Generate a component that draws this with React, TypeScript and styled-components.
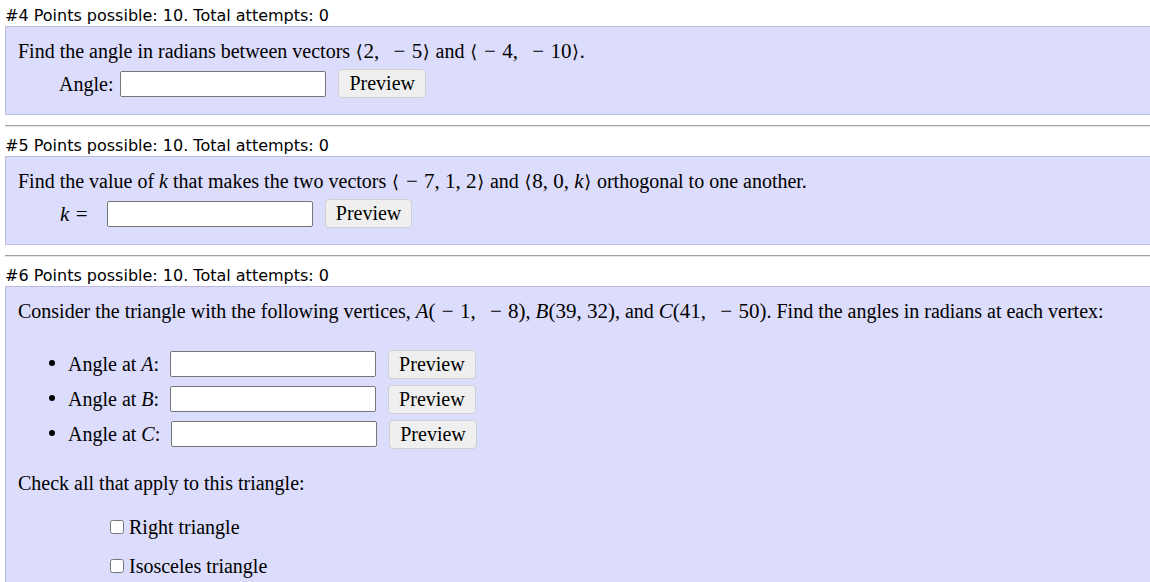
import React from "react";
import styled, { createGlobalStyle } from "styled-components";

const Global = createGlobalStyle`
  html, body { margin: 0; padding: 0; background: #fff; overflow: hidden; }
  body { font-family: "Liberation Serif", "Times New Roman", serif; color: #000; }
`;

const Page = styled.div`
  width: 1170px;
  padding: 5px 0 0 5px;
`;

const Header = styled.div`
  font-family: "DejaVu Sans", "Noto Sans", sans-serif;
  font-size: 16px;
  line-height: 21px;
  color: #000;
`;

const Box = styled.div`
  background: #dcdcfc;
  border: 1px solid #bcbce0;
  padding: 12px 12px 16px;
  font-size: 20px;
`;

const Separator = styled.hr`
  margin: 10px 0 8px;
  height: 0;
  border: none;
  border-top: 1px solid #a0a0a0;
  border-bottom: 1px solid #e4e4e4;
`;

const Line = styled.div<{ $mt?: number }>`
  height: 24px;
  line-height: 24px;
  margin-top: ${(p) => p.$mt ?? 0}px;
  white-space: nowrap;
`;

const AnswerRow = styled.div<{ $indent: number; $gap: number }>`
  display: flex;
  align-items: center;
  margin-top: 6px;
  padding-left: ${(p) => p.$indent}px;
  height: 29px;
  & > label {
    margin-right: ${(p) => p.$gap}px;
  }
`;

const Label = styled.label`
  line-height: 24px;
  vertical-align: middle;
`;

const TextInput = styled.input`
  box-sizing: border-box;
  width: 206px;
  height: 26px;
  border: 1px solid #767676;
  border-radius: 2px;
  background: #fff;
  margin: 0 12px 0 0;
  padding: 0 4px;
  vertical-align: middle;
`;

const PreviewButton = styled.button`
  box-sizing: border-box;
  height: 29px;
  padding: 0 10px;
  border: 1px solid #d0d0d0;
  border-radius: 4px;
  background: #efefef;
  font-family: "Liberation Serif", "Times New Roman", serif;
  font-size: 20px;
  color: #000;
  line-height: 27px;
  vertical-align: middle;
`;

const List = styled.ul`
  margin: 22px 0 0;
  padding-left: 50px;
`;

const ListItem = styled.li`
  height: 35px;
  line-height: 35px;
  & > label {
    margin-right: 11px;
  }
`;

const CheckGroup = styled.div`
  display: flex;
  flex-direction: column;
  gap: 15px;
  margin-top: 20px;
  padding-left: 88px;
`;

const CheckRow = styled.label`
  display: flex;
  align-items: center;
  line-height: 24px;
`;

const CheckBox = styled.input`
  width: 14px;
  height: 14px;
  margin: 0 5px 0 4px;
`;

const M = styled.span`
  font-family: "Liberation Serif", "DejaVu Serif", serif;
  font-size: 1.05em;
`;

const V = styled.i`
  font-family: "Liberation Serif", "DejaVu Serif", serif;
`;

const Br = styled.span`
  font-family: "DejaVu Serif", serif;
  font-size: 0.85em;
  margin: 0 0.04em;
`;

const Op = styled.span`
  margin: 0 0.3em;
`;

const Sp = styled.span`
  display: inline-block;
  width: 0.38em;
`;

const L = () => <Br>⟨</Br>;
const R = () => <Br>⟩</Br>;
const Minus = () => <Op>−</Op>;

const Answer = ({
  label,
  indent,
  gap,
}: {
  label: React.ReactNode;
  indent: number;
  gap: number;
}) => (
  <AnswerRow $indent={indent} $gap={gap}>
    <Label>{label}</Label>
    <TextInput type="text" />
    <PreviewButton type="button">Preview</PreviewButton>
  </AnswerRow>
);

const Problem = ({
  n,
  children,
}: {
  n: number;
  children: React.ReactNode;
}) => (
  <section>
    <Header>#{n} Points possible: 10. Total attempts: 0</Header>
    <Box>{children}</Box>
  </section>
);

export default function App() {
  return (
    <>
      <Global />
      <Page>
        <Problem n={4}>
          <Line>
            Find the angle in radians between vectors{" "}
            <M>
              <L />2,<Sp />
              <Minus />5<R />
            </M>{" "}
            and{" "}
            <M>
              <L />
              <Minus />4,<Sp />
              <Minus />10<R />
            </M>
            .
          </Line>
          <Answer label="Angle:" indent={41} gap={7} />
        </Problem>
        <Separator />
        <Problem n={5}>
          <Line>
            Find the value of <V>k</V> that makes the two vectors{" "}
            <M>
              <L />
              <Minus />7, 1, 2<R />
            </M>{" "}
            and{" "}
            <M>
              <L />8, 0, <V>k</V>
              <R />
            </M>{" "}
            orthogonal to one another.
          </Line>
          <Answer
            label={
              <M>
                <V>k</V>
                <Op>=</Op>
              </M>
            }
            indent={42}
            gap={13}
          />
        </Problem>
        <Separator />
        <Problem n={6}>
          <Line>
            Consider the triangle with the following vertices,{" "}
            <M>
              <V>A</V>(<Minus />1,<Sp />
              <Minus />8)
            </M>
            ,{" "}
            <M>
              <V>B</V>(39, 32)
            </M>
            , and{" "}
            <M>
              <V>C</V>(41,<Sp />
              <Minus />50)
            </M>
            . Find the angles in radians at each vertex:
          </Line>
          <List>
            {["A", "B", "C"].map((v) => (
              <ListItem key={v}>
                <Label>
                  Angle at <V>{v}</V>:
                </Label>
                <TextInput type="text" />
                <PreviewButton type="button">Preview</PreviewButton>
              </ListItem>
            ))}
          </List>
          <Line $mt={21}>Check all that apply to this triangle:</Line>
          <CheckGroup>
            <CheckRow>
              <CheckBox type="checkbox" />
              Right triangle
            </CheckRow>
            <CheckRow>
              <CheckBox type="checkbox" />
              Isosceles triangle
            </CheckRow>
          </CheckGroup>
        </Problem>
      </Page>
    </>
  );
}
